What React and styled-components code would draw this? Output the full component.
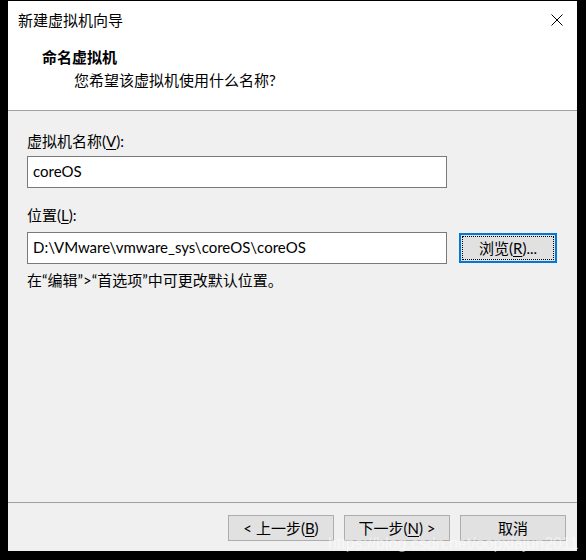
import styled, { createGlobalStyle } from 'styled-components';

const GlobalStyle = createGlobalStyle`
  html, body {
    margin: 0;
    padding: 0;
    background: #000;
  }
  body {
    font-family: Lato, 'Noto Sans CJK SC', 'Microsoft YaHei', sans-serif;
    font-size: 15px;
    color: #000;
  }
`;

const Screen = styled.div`
  position: relative;
  width: 586px;
  height: 560px;
  padding: 1px 9px 9px 8px;
  box-sizing: border-box;
  overflow: hidden;
`;

const Window = styled.div`
  display: flex;
  flex-direction: column;
  height: 100%;
  background: #f0f0f0;
`;

const TitleBar = styled.div`
  display: flex;
  align-items: center;
  justify-content: space-between;
  height: 38px;
  padding: 0 14px 0 10px;
  background: #fff;
`;

const TitleText = styled.span`
  line-height: 20px;
`;

const CloseIcon = () => (
  <svg width="12" height="12" viewBox="0 0 12 12">
    <path d="M0.5 0.5 L11.5 11.5 M11.5 0.5 L0.5 11.5" stroke="#000" strokeWidth="1" />
  </svg>
);

const Header = styled.div`
  background: #fff;
  padding: 8px 0 20px 34px;
  border-bottom: 1px solid #a0a0a0;
`;

const HeaderTitle = styled.div`
  font-weight: 700;
  line-height: 20px;
`;

const HeaderSub = styled.div`
  line-height: 20px;
  margin: 3px 0 0 32px;
`;

const Content = styled.div`
  flex: 1;
  padding: 20px 0 0 19px;
`;

const Label = styled.div`
  line-height: 20px;
  margin-top: ${(p) => p.$top || 0}px;

  u {
    text-decoration: underline;
    text-underline-offset: 2px;
  }
`;

const Row = styled.div`
  display: flex;
  align-items: center;
  gap: 12px;
  margin-top: ${(p) => p.$top || 0}px;
`;

const TextBox = styled.div`
  width: 420px;
  height: 32px;
  box-sizing: border-box;
  border: 1px solid #7a7a7a;
  background: #fff;
  padding: 0 5px;
  line-height: 28px;
  white-space: nowrap;
`;

const Button = styled.div`
  display: flex;
  align-items: center;
  justify-content: center;
  width: ${(p) => p.$w || 106}px;
  height: ${(p) => p.$h || 26}px;
  box-sizing: border-box;
  background: #e1e1e1;
  border: ${(p) => (p.$focused ? '2px solid #0078d7' : '1px solid #adadad')};
  line-height: 20px;
  white-space: pre;

  u {
    text-decoration: underline;
    text-underline-offset: 2px;
  }
`;

const FocusRing = styled.div`
  display: flex;
  align-items: center;
  justify-content: center;
  width: calc(100% - 2px);
  height: calc(100% - 2px);
  box-sizing: border-box;
  border: 1px dotted #000;
`;

const Hint = styled.div`
  line-height: 20px;
  margin-top: 6px;
`;

const Footer = styled.div`
  display: flex;
  justify-content: flex-end;
  gap: 10px;
  border-top: 1px solid #a0a0a0;
  padding: 12px 11px 10px 0;
`;

const Watermark = styled.div`
  position: absolute;
  left: 328px;
  top: 535px;
  font-family: 'Liberation Sans', Arial, sans-serif;
  font-size: 16px;
  color: rgba(255, 255, 255, 0.5);
  white-space: nowrap;
  pointer-events: none;
`;

export default function App() {
  return (
    <Screen>
      <GlobalStyle />
      <Window>
        <TitleBar>
          <TitleText>新建虚拟机向导</TitleText>
          <CloseIcon />
        </TitleBar>
        <Header>
          <HeaderTitle>命名虚拟机</HeaderTitle>
          <HeaderSub>您希望该虚拟机使用什么名称?</HeaderSub>
        </Header>
        <Content>
          <Label>
            虚拟机名称(<u>V</u>):
          </Label>
          <Row $top={5}>
            <TextBox>coreOS</TextBox>
          </Row>
          <Label $top={17}>
            位置(<u>L</u>):
          </Label>
          <Row $top={7}>
            <TextBox>D:\VMware\vmware_sys\coreOS\coreOS</TextBox>
            <Button $w={98} $h={30} $focused>
              <FocusRing>
                浏览(<u>R</u>)...
              </FocusRing>
            </Button>
          </Row>
          <Hint>在“编辑”&gt;“首选项”中可更改默认位置。</Hint>
        </Content>
        <Footer>
          <Button>
            &lt; 上一步(<u>B</u>)
          </Button>
          <Button>
            下一步(<u>N</u>) &gt;
          </Button>
          <Button>取消</Button>
        </Footer>
      </Window>
      <Watermark>https://blog.csdn.net/oopxiajun2011</Watermark>
    </Screen>
  );
}
